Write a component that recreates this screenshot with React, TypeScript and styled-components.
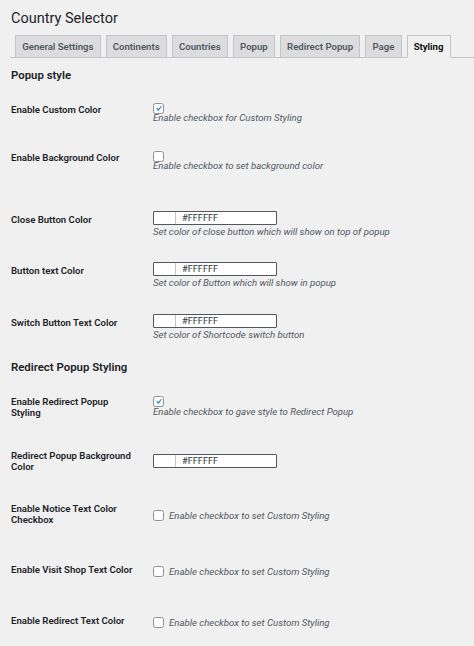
import React from 'react';
import styled, { createGlobalStyle } from 'styled-components';

const Global = createGlobalStyle`
	html, body {
		margin: 0;
		background: #f0f0f1;
	}
	body {
		font-family: Roboto, "Liberation Sans", sans-serif;
		color: #1d2327;
	}
`;

const Page = styled.div`
	padding: 8px 0 0 10px;
	min-height: 638px;
`;
const Title = styled.h1`
	margin: 0 0 0 1px;
	font-size: 14.5px;
	font-weight: 400;
	line-height: 21px;
`;
const TabBar = styled.nav`
	display: flex;
	gap: 5px;
	margin-top: 6px;
	padding-left: 5px;
	border-bottom: 1px solid #c3c4c7;
`;
const Tab = styled.div<{ $active?: boolean }>`
	height: 23px;
	margin-bottom: -1px;
	padding: 0 6.2px;
	box-sizing: border-box;
	border: 1px solid #c3c4c7;
	border-bottom-color: ${(p) => (p.$active ? '#f0f0f1' : '#c3c4c7')};
	background: ${(p) => (p.$active ? '#f0f0f1' : '#dcdcde')};
	color: ${(p) => (p.$active ? '#000' : '#50575e')};
	font-size: 9.6px;
	font-weight: 600;
	line-height: 21px;
	white-space: nowrap;
`;
const Heading = styled.h2<{ $top: number }>`
	margin: ${(p) => p.$top}px 0 0 1px;
	font-size: 11.4px;
	font-weight: 600;
	line-height: 15px;
`;
const Table = styled.div`
	margin-top: 7px;
`;
const Row = styled.div<{ $h: number }>`
	display: grid;
	grid-template-columns: 143px 1fr;
	align-items: start;
	height: ${(p) => p.$h}px;
`;
const Label = styled.div`
	padding: 14px 14px 0 1px;
	font-size: 9.6px;
	font-weight: 600;
	line-height: 11.5px;
`;
const Field = styled.div<{ $pt: number; $inline?: boolean }>`
	padding-top: ${(p) => p.$pt}px;
	display: flex;
	flex-direction: ${(p) => (p.$inline ? 'row' : 'column')};
	align-items: ${(p) => (p.$inline ? 'center' : 'flex-start')};
	gap: ${(p) => (p.$inline ? '5px' : '0')};
`;
const Box = styled.span`
	display: flex;
	align-items: center;
	justify-content: center;
	width: 11px;
	height: 11px;
	box-sizing: border-box;
	border: 1px solid #8c8f94;
	border-radius: 2.5px;
	background: #fff;
	flex: none;
	overflow: visible;
`;
const Description = styled.div<{ $mt?: number }>`
	margin-top: ${(p) => p.$mt ?? 0}px;
	color: #50575e;
	font-size: 9.6px;
	font-style: italic;
	line-height: 12px;
	white-space: nowrap;
`;
const ColorInput = styled.div`
	display: flex;
	width: 124px;
	height: 14px;
	box-sizing: border-box;
	border: 1px solid #50575e;
	border-radius: 1px;
	background: #fff;
`;
const Swatch = styled.span<{ $color: string }>`
	width: 21px;
	background: ${(p) => p.$color};
	border-right: 1px solid #c3c4c7;
`;
const HexText = styled.span`
	padding-left: 6px;
	font-size: 9.2px;
	line-height: 12px;
	color: #2c3338;
`;

const Checkbox: React.FC<{ checked?: boolean }> = ({ checked }) => (
	<Box>
		{checked && (
			<svg width="11" height="11" viewBox="0 0 20 20" style={{ flex: 'none' }}>
				<path
					d="M14.83 4.89l1.34.94-5.81 8.38H9.02L5.78 9.67l1.34-1.25 2.57 2.4z"
					fill="#3582c4"
				/>
			</svg>
		)}
	</Box>
);

const Color: React.FC<{ value: string }> = ({ value }) => (
	<ColorInput>
		<Swatch $color={value} />
		<HexText>{value}</HexText>
	</ColorInput>
);

const tabs = ['General Settings', 'Continents', 'Countries', 'Popup', 'Redirect Popup', 'Page', 'Styling'];
const custom = 'Enable checkbox to set Custom Styling';

export default function App() {
	return (
		<>
			<Global />
			<Page>
				<Title>Country Selector</Title>
				<TabBar>
					{tabs.map((t) => (
						<Tab key={t} $active={t === 'Styling'}>
							{t}
						</Tab>
					))}
				</TabBar>

				<Heading $top={9.5}>Popup style</Heading>
				<Table>
					<Row $h={48}>
						<Label>Enable Custom Color</Label>
						<Field $pt={13}>
							<Checkbox checked />
							<Description $mt={-1.5}>Enable checkbox for Custom Styling</Description>
						</Field>
					</Row>
					<Row $h={62}>
						<Label>Enable Background Color</Label>
						<Field $pt={13}>
							<Checkbox />
							<Description $mt={-1.5}>Enable checkbox to set background color</Description>
						</Field>
					</Row>
					<Row $h={51}>
						<Label>Close Button Color</Label>
						<Field $pt={11}>
							<Color value="#FFFFFF" />
							<Description $mt={1}>Set color of close button which will show on top of popup</Description>
						</Field>
					</Row>
					<Row $h={52}>
						<Label>Button text Color</Label>
						<Field $pt={11}>
							<Color value="#FFFFFF" />
							<Description $mt={1}>Set color of Button which will show in popup</Description>
						</Field>
					</Row>
					<Row $h={57}>
						<Label>Switch Button Text Color</Label>
						<Field $pt={11}>
							<Color value="#FFFFFF" />
							<Description $mt={1}>Set color of Shortcode switch button</Description>
						</Field>
					</Row>
				</Table>

				<Heading $top={0}>Redirect Popup Styling</Heading>
				<Table>
					<Row $h={54}>
						<Label>Enable Redirect Popup Styling</Label>
						<Field $pt={14}>
							<Checkbox checked />
							<Description $mt={-1}>Enable checkbox to gave style to Redirect Popup</Description>
						</Field>
					</Row>
					<Row $h={53}>
						<Label>Redirect Popup Background Color</Label>
						<Field $pt={18}>
							<Color value="#FFFFFF" />
						</Field>
					</Row>
					<Row $h={61}>
						<Label>Enable Notice Text Color Checkbox</Label>
						<Field $pt={21} $inline>
							<Checkbox />
							<Description>{custom}</Description>
						</Field>
					</Row>
					<Row $h={51}>
						<Label>Enable Visit Shop Text Color</Label>
						<Field $pt={16} $inline>
							<Checkbox />
							<Description>{custom}</Description>
						</Field>
					</Row>
					<Row $h={44}>
						<Label>Enable Redirect Text Color</Label>
						<Field $pt={16} $inline>
							<Checkbox />
							<Description>{custom}</Description>
						</Field>
					</Row>
				</Table>
			</Page>
		</>
	);
}
